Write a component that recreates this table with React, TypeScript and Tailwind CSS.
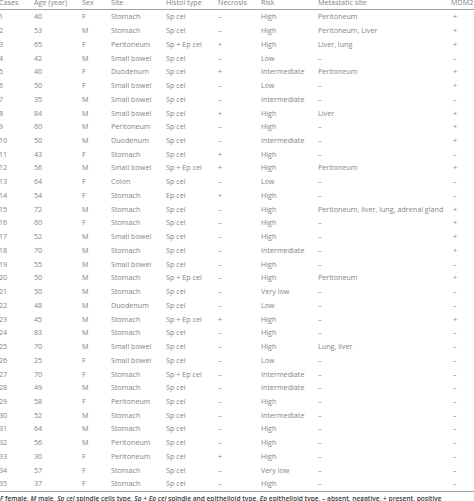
import React from "react";

const rows: string[][] = [
  ["1", "40", "F", "Stomach", "Sp cel", "–", "High", "Peritoneum", "+"],
  ["2", "53", "M", "Stomach", "Sp cel", "–", "High", "Peritoneum, Liver", "+"],
  ["3", "65", "F", "Peritoneum", "Sp + Ep cel", "+", "High", "Liver, lung", "+"],
  ["4", "42", "M", "Small bowel", "Sp cel", "–", "Low", "–", "–"],
  ["5", "40", "F", "Duodenum", "Sp cel", "+", "Intermediate", "Peritoneum", "+"],
  ["6", "50", "F", "Small bowel", "Sp cel", "–", "Low", "–", "+"],
  ["7", "35", "M", "Small bowel", "Sp cel", "–", "Intermediate", "–", "–"],
  ["8", "84", "M", "Small bowel", "Sp cel", "+", "High", "Liver", "+"],
  ["9", "60", "M", "Peritoneum", "Sp cel", "–", "High", "–", "+"],
  ["10", "50", "M", "Duodenum", "Sp cel", "–", "Intermediate", "–", "+"],
  ["11", "43", "F", "Stomach", "Sp cel", "+", "High", "–", "–"],
  ["12", "56", "M", "Small bowel", "Sp + Ep cel", "+", "High", "Peritoneum", "+"],
  ["13", "64", "F", "Colon", "Sp cel", "–", "Low", "–", "–"],
  ["14", "54", "F", "Stomach", "Ep cel", "+", "High", "–", "–"],
  ["15", "72", "M", "Stomach", "Sp cel", "–", "High", "Peritoneum, liver, lung, adrenal gland", "+"],
  ["16", "60", "F", "Stomach", "Sp cel", "–", "High", "–", "+"],
  ["17", "52", "M", "Small bowel", "Sp cel", "–", "High", "–", "+"],
  ["18", "70", "M", "Stomach", "Sp cel", "–", "Intermediate", "–", "+"],
  ["19", "55", "M", "Small bowel", "Sp cel", "–", "High", "–", "–"],
  ["20", "50", "M", "Stomach", "Sp + Ep cel", "–", "High", "Peritoneum", "+"],
  ["21", "50", "M", "Stomach", "Sp cel", "–", "Very low", "–", "–"],
  ["22", "48", "M", "Duodenum", "Sp cel", "–", "Low", "–", "–"],
  ["23", "45", "M", "Stomach", "Sp + Ep cel", "+", "High", "–", "+"],
  ["24", "83", "M", "Stomach", "Sp cel", "–", "High", "–", "–"],
  ["25", "70", "M", "Small bowel", "Sp cel", "–", "High", "Lung, liver", "–"],
  ["26", "25", "F", "Small bowel", "Sp cel", "–", "Low", "–", "–"],
  ["27", "70", "F", "Stomach", "Sp + Ep cel", "–", "Intermediate", "–", "–"],
  ["28", "49", "M", "Stomach", "Sp cel", "–", "Intermediate", "–", "–"],
  ["29", "58", "F", "Peritoneum", "Sp cel", "–", "High", "–", "–"],
  ["30", "52", "M", "Stomach", "Sp cel", "–", "Intermediate", "–", "–"],
  ["31", "64", "M", "Stomach", "Sp cel", "–", "High", "–", "–"],
  ["32", "56", "M", "Peritoneum", "Sp cel", "–", "High", "–", "–"],
  ["33", "30", "F", "Peritoneum", "Sp cel", "+", "High", "–", "–"],
  ["34", "57", "F", "Stomach", "Sp cel", "–", "Very low", "–", "–"],
  ["35", "37", "F", "Stomach", "Sp cel", "–", "High", "–", "–"],
];

const headers = ["Cases", "Age (year)", "Sex", "Site", "Histol type", "Necrosis", "Risk", "Metastatic site", "MDM2"];
const widths = ["w-[35px]", "w-[48px]", "w-[29px]", "w-[55px]", "w-[52px]", "w-[43px]", "w-[57px]", "w-[133px]", "w-[40px]"];

function Row({ cells, header }: { cells: string[]; header?: boolean }) {
  return (
    <div
      className={
        "flex items-center h-[13.74px] whitespace-nowrap " +
        (header ? "border-b border-[#a0a0a0]" : "")
      }
    >
      {cells.map((c, i) => (
        <div key={i} className={widths[i] + " shrink-0 " + (i === 8 && !header ? "pl-[2px]" : "")}>
          {c}
        </div>
      ))}
    </div>
  );
}

export default function App() {
  return (
    <div
      className="w-[474px] h-[501px] overflow-hidden bg-white text-[#858585] text-[7.2px] leading-none"
      style={{ fontFamily: '"Open Sans", "DejaVu Sans", sans-serif' }}
    >
      <div className="ml-[-1px] mt-[-3.6px]">
        <Row cells={headers} header />
        <div className="border-b border-[#a0a0a0]">
          {rows.map((r, i) => (
            <Row key={i} cells={r} />
          ))}
        </div>
        <div
          className="pt-[4px] pl-[1px] text-[6.6px] text-[#3a3a3a] font-semibold whitespace-nowrap"
          style={{ fontFamily: '"Liberation Sans Narrow", "Open Sans", sans-serif' }}
        >
          <i>F</i> female, <i>M</i> male, <i>Sp cel</i> spindle cells type, <i>Sp + Ep cel</i> spindle and epithelioid type, <i>Ep</i> epithelioid type, – absent, negative, + present, positive
        </div>
      </div>
    </div>
  );
}
